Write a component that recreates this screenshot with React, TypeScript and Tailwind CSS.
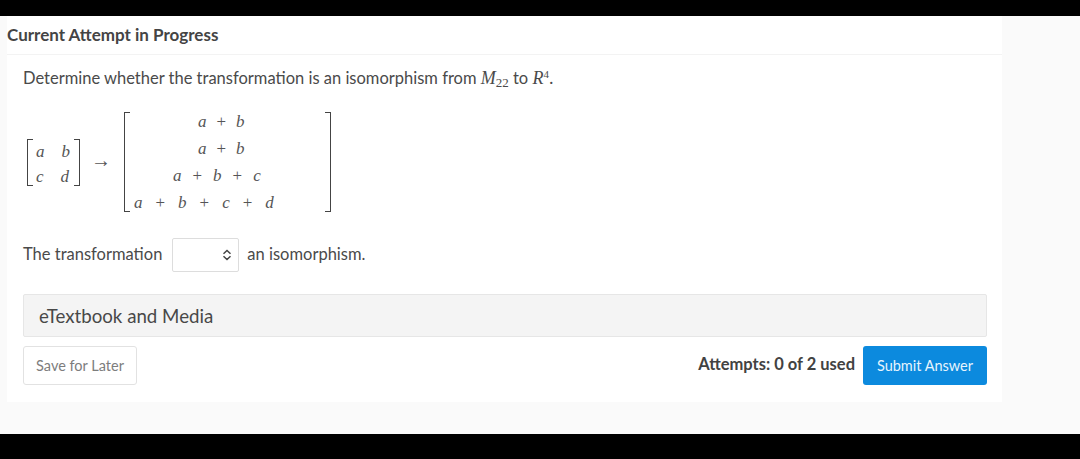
const serif = "font-['Liberation_Serif',serif]"

function Term({ parts, className }: { parts: string[]; className: string }) {
  return (
    <div className={`flex h-[27px] items-center text-[17px] text-[#555] ${serif} ${className}`}>
      {parts.map((p, i) =>
        p === '+' ? (
          <span key={i}>+</span>
        ) : (
          <i key={i}>{p}</i>
        ),
      )}
    </div>
  )
}

function Bracket({ side, className }: { side: 'left' | 'right'; className: string }) {
  const borders =
    side === 'left' ? 'border-l-[1.5px] border-t-[1.5px] border-b-[1.5px]' : 'border-r-[1.5px] border-t-[1.5px] border-b-[1.5px]'
  return <div className={`w-[6px] shrink-0 border-[#444] ${borders} ${className}`} />
}

export default function App() {
  return (
    <div className="flex h-[459px] w-[1080px] flex-col overflow-hidden bg-[#fafafa] font-['Lato',sans-serif]">
      <div className="h-4 shrink-0 bg-black" />
      <div className="flex-1">
        <div className="ml-[7px] h-[386px] w-[995px] bg-white">
          <div className="flex h-[39px] items-center border-b border-[#f3f3f3] text-[17px] font-bold text-[#444]">
            Current Attempt in Progress
          </div>

          <div className="pl-4 pr-[15px]">
            <p className="mt-[11px] flex h-[24px] items-center text-[16.5px] text-[#4a4a4a]">
              Determine whether the transformation is an isomorphism from&nbsp;
              <span className={`${serif} text-[18px]`}>
                <i>M</i>
                <sub className="text-[13px]">22</sub>
              </span>
              &nbsp;to&nbsp;
              <span className={`${serif} text-[18px]`}>
                <i>R</i>
                <sup className="text-[11px]">4</sup>.
              </span>
            </p>

            <div className="mt-[22px] flex h-[100px] items-center">
              <div className="ml-[4px] flex items-center">
                <Bracket side="left" className="h-[47px]" />
                <div className={`grid h-[47px] w-[41px] grid-cols-2 items-center text-[17px] text-[#555] ${serif}`}>
                  <i className="pl-[3px]">a</i>
                  <i className="pl-[8px]">b</i>
                  <i className="pl-[3px]">c</i>
                  <i className="pl-[7px]">d</i>
                </div>
                <Bracket side="right" className="h-[47px]" />
              </div>
              <span className={`mb-[5px] ml-[11px] w-[17px] text-[20px] leading-none text-[#555] ${serif}`}>→</span>
              <div className="ml-[16px] flex items-center">
                <Bracket side="left" className="h-[100px]" />
                <div className="h-[108px] w-[195px] pt-[0.5px]">
                  <Term parts={['a', '+', 'b']} className="gap-[10px] pl-[68px]" />
                  <Term parts={['a', '+', 'b']} className="gap-[10px] pl-[68px]" />
                  <Term parts={['a', '+', 'b', '+', 'c']} className="gap-[11px] pl-[43px]" />
                  <Term parts={['a', '+', 'b', '+', 'c', '+', 'd']} className="gap-[13px] pl-[4px]" />
                </div>
                <Bracket side="right" className="h-[100px]" />
              </div>
            </div>

            <div className="mt-[26px] flex items-center text-[16.5px] text-[#4a4a4a]">
              <span className="mb-[2px]">The transformation</span>
              <div className="ml-[10px] flex h-[34px] w-[67px] items-center justify-end rounded-[2px] border border-[#ddd] bg-white pr-[6px]">
                <svg width="10" height="12" viewBox="0 0 10 12" fill="none" stroke="#444" strokeWidth="1.5">
                  <path d="M1.5 4.8 5 1.5l3.5 3.3M1.5 7.2 5 10.5l3.5-3.3" />
                </svg>
              </div>
              <span className="mb-[2px] ml-[8px]">an isomorphism.</span>
            </div>

            <div className="mt-[22px] flex h-[43px] items-center rounded-[2px] border border-[#e6e6e6] bg-[#f4f4f4] pl-[15px] pt-[1px] text-[18.7px] text-[#484848]">
              eTextbook and Media
            </div>

            <div className="mt-[9px] flex items-center justify-between">
              <button className="flex h-[39px] w-[114px] items-center justify-center rounded-[3px] border border-[#e2e2e2] bg-white text-[14.5px] text-[#7d7d7d]">
                Save for Later
              </button>
              <div className="flex items-center">
                <span className="mb-[2px] text-[16.5px] font-bold text-[#424242]">Attempts: 0 of 2 used</span>
                <button className="ml-[8px] flex h-[39px] w-[124px] items-center justify-center rounded-[3px] bg-[#0c8ade] text-[14.5px] text-[#e6f4fd]">
                  Submit Answer
                </button>
              </div>
            </div>
          </div>
        </div>
      </div>
      <div className="h-[25px] shrink-0 bg-black" />
    </div>
  )
}
